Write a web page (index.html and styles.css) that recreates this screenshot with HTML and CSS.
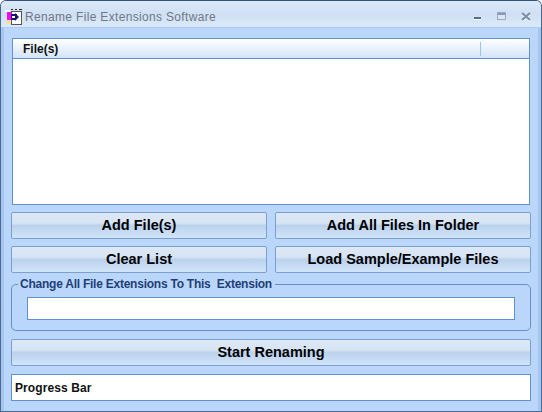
FILE: index.html
```html
<!DOCTYPE HTML>
<html>
<head>
	<title>Rename File Extensions Software</title>
	<link rel="stylesheet" href="styles.css">
</head>
<body>
	<div class="window">
		<div class="titlebar">
			<svg class="appicon" width="18" height="18" viewBox="0 0 18 18">
				<path d="M1 9h6v7H3a2 2 0 0 1-2-2z" fill="#f5dfa8"/>
				<rect x="0" y="2" width="5" height="2" fill="#fff"/>
				<rect x="2" y="4" width="7" height="8" fill="#f0f"/>
				<rect x="6.5" y="3.5" width="10" height="13" fill="#fff" stroke="#555"/>
				<path d="M6 1.5h2M10 1.5h2M14 1.5h3" stroke="#222"/>
				<path d="M6 6h6v2h-1v4H6zM10 5l4 4-4 4z" fill="#16166e"/>
				<rect x="7" y="8" width="3" height="2" fill="#fff"/>
			</svg>
			<span class="apptitle">Rename File Extensions Software</span>
			<div class="winbuttons">
				<svg width="9" height="5" viewBox="0 0 9 5" class="wmin"><rect y="1" width="7" height="2" fill="#5a6c8a"/><rect y="3" width="7" height="1" fill="#fff"/></svg>
				<svg width="10" height="9" viewBox="0 0 10 9" class="wmax"><rect x=".5" y=".5" width="8" height="7" fill="#dbe6f4" stroke="#9aa9c0"/><rect x="1" y="1" width="7" height="2" fill="#8a9ab4"/></svg>
				<svg width="11" height="10" viewBox="0 0 11 10" class="wclose"><path d="M1 2l8 7M9 2l-8 7" stroke="#fff" stroke-width="2"/><path d="M1 1l8 7M9 1l-8 7" stroke="#7c8fa9" stroke-width="2.2"/></svg>
			</div>
		</div>
		<div class="content">
			<div class="filelist">
				<div class="listhead">
					<div class="colname">File(s)</div>
					<div class="colrest"></div>
				</div>
			</div>
			<div class="btnrow">
				<button class="button">Add File(s)</button>
				<button class="button">Add All Files In Folder</button>
			</div>
			<div class="btnrow">
				<button class="button">Clear List</button>
				<button class="button">Load Sample/Example Files</button>
			</div>
			<fieldset class="extgroup">
				<legend>Change All File Extensions To This&nbsp; Extension</legend>
				<input type="text" class="textbox">
			</fieldset>
			<button class="button startbtn">Start Renaming</button>
			<div class="progress">Progress Bar</div>
		</div>
	</div>
</body>
</html>
```

FILE: styles.css
```css
* {
	font-family: "Liberation Sans", Arial, sans-serif;
	box-sizing: border-box;
}
body {
	margin: 0;
	background-color: #fff;
}
/* window frame */
.window {
	width: 542px;
	height: 412px;
	background-color: #bad7fb;
	border: 1px solid #4a6a94;
	border-top-color: #34527f;
	border-radius: 6px 6px 0 0;
	overflow: hidden;
	display: flex;
	flex-direction: column;
}
.titlebar {
	height: 27px;
	flex: none;
	display: flex;
	align-items: center;
	padding-left: 4px;
	padding-top: 5px;
	background: linear-gradient(#dce9f8, #cfe0f5 50%, #dbe9fa);
	border-bottom: 1px solid #a9cbf4;
}
.appicon {
	flex: none;
}
.apptitle {
	margin-left: 2px;
	font-size: 12px;
	color: #6f7885;
	letter-spacing: .33px;
}
.winbuttons {
	margin-left: auto;
	display: flex;
	align-items: center;
}
.wmin {
	margin-right: 14px;
	margin-top: 3px;
}
.wmax {
	margin-right: 14px;
}
.wclose {
	margin-right: 9px;
}
/* main area */
.content {
	flex: 1;
	padding: 10px 7px 0 7px;
	border-left: 3px solid #a5c6ee;
	border-right: 3px solid #a5c6ee;
	display: flex;
	flex-direction: column;
}
.filelist {
	height: 167px;
	margin: 0 1px;
	background-color: #fff;
	border: 1px solid #6590cf;
}
.listhead {
	height: 20px;
	display: flex;
	align-items: center;
	background: linear-gradient(#fff, #d3e4f9);
	border-bottom: 1px solid #6590cf;
	font-size: 12px;
	font-weight: bold;
	color: #111;
}
.colname {
	width: 468px;
	height: 14px;
	line-height: 14px;
	padding-left: 10px;
	border-right: 1px solid #9cc3f3;
}
.btnrow {
	display: flex;
	gap: 8px;
	margin-top: 7px;
}
.btnrow .button {
	flex: 1;
}
/* buttons */
.button {
	height: 27px;
	padding: 0 0 2px 0;
	border: 1px solid #7d9fce;
	border-radius: 2px;
	background: linear-gradient(#dde8f6, #d7e4f4 40%, #bcd2ec 50%, #d0e4fa);
	font-size: 14.5px;
	font-weight: bold;
	color: #000;
}
.startbtn {
	margin-top: 8px;
	flex: none;
}
/* extension group */
.extgroup {
	height: 54px;
	margin: 4px 0 0 0;
	padding: 0 15px;
	border: 1px solid #6590cf;
	border-radius: 5px;
}
.extgroup legend {
	padding: 0 3px 0 2px;
	margin-left: -9px;
	font-size: 12px;
	letter-spacing: -.24px;
	font-weight: bold;
	color: #1f3f78;
}
.textbox {
	display: block;
	width: 100%;
	height: 23px;
	margin-top: 6px;
	border: 1px solid #6590cf;
	background-color: #fff;
}
.progress {
	height: 27px;
	margin-top: 8px;
	padding-left: 3px;
	line-height: 26px;
	background-color: #fff;
	border: 1px solid #6590cf;
	font-size: 12px;
	letter-spacing: .1px;
	font-weight: bold;
	color: #111;
}
```
